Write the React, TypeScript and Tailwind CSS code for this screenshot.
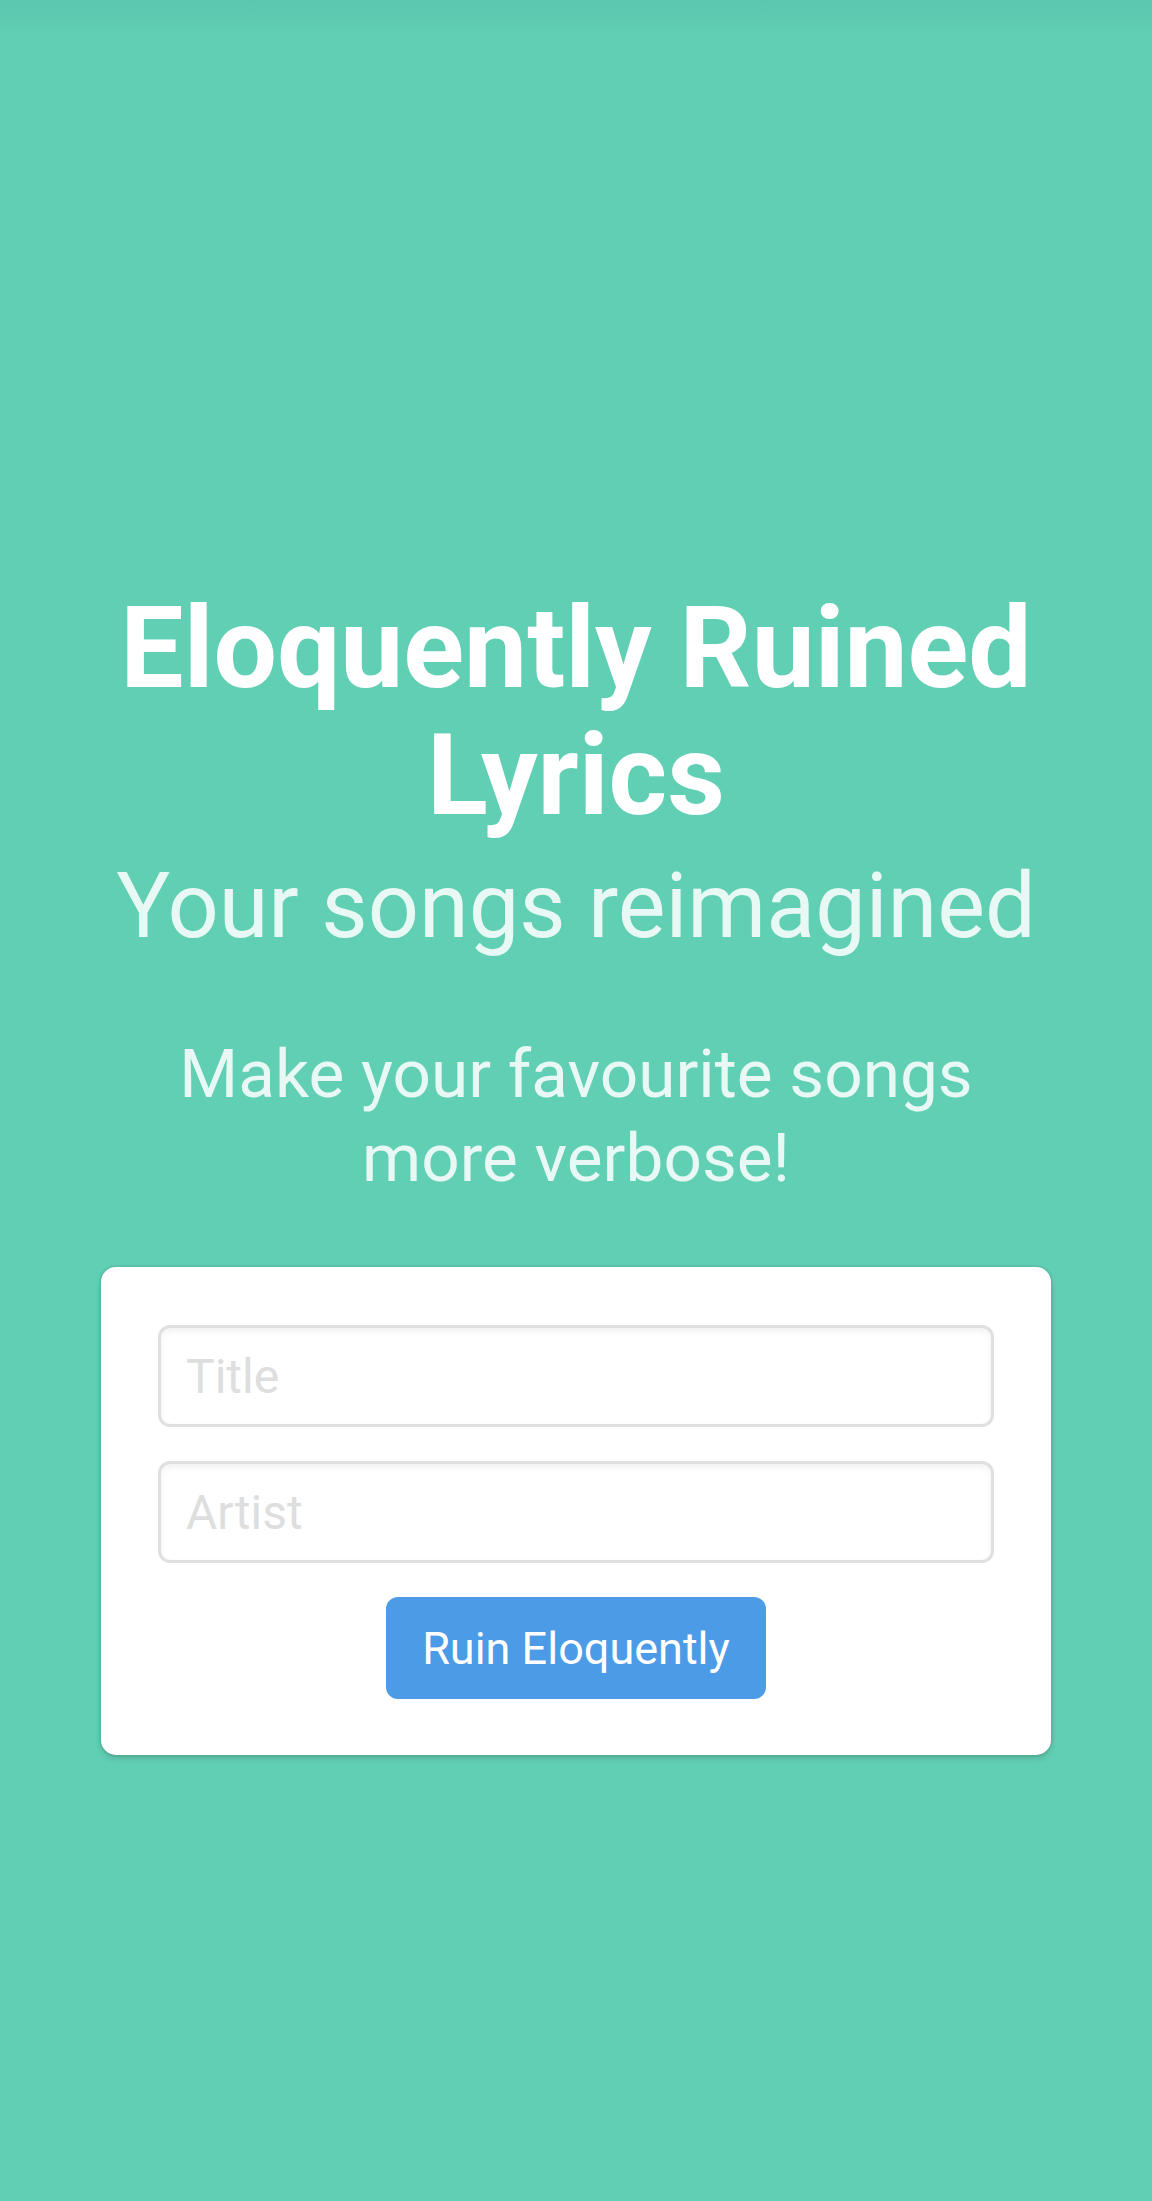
export default function App() {
  return (
    <main
      className="relative min-h-[2201px] bg-[#61cfb4] text-white"
      style={{ fontFamily: 'Roboto, "Noto Sans", sans-serif' }}
    >
      {/* faint shade under the status bar */}
      <div className="pointer-events-none absolute inset-x-0 top-0 h-[36px] bg-gradient-to-b from-[#5bc7ae] to-transparent" />

      <section className="relative mx-auto w-[950px] pt-[586px] text-center">
        <h1 className="text-[112.5px] font-bold leading-[126.5px] text-white">
          Eloquently Ruined Lyrics
        </h1>
        <h2 className="mt-[12px] text-[90px] font-normal leading-[112.5px] text-[#e8f8f4]">
          Your songs reimagined
        </h2>

        <p className="mt-[68px] text-[67.5px] leading-[84.4px] text-[#e8f8f4]">
          Make your favourite songs more verbose!
        </p>

        <form
          className="mt-[67px] rounded-[15px] bg-white px-[57px] pt-[58px] pb-[56px] shadow-[0_3px_6px_rgba(0,0,0,0.16),0_0_0_2px_rgba(0,0,0,0.04)]"
          onSubmit={(e) => e.preventDefault()}
        >
          <input
            type="text"
            placeholder="Title"
            className="block h-[102px] w-full rounded-[12px] border-[3px] border-[#e0e0e0] bg-white px-[25px] text-[48px] text-[#363636] shadow-[inset_0_3px_6px_rgba(10,10,10,0.06)] outline-none placeholder:text-[#dedede]"
          />
          <input
            type="text"
            placeholder="Artist"
            className="mt-[34px] block h-[102px] w-full rounded-[12px] border-[3px] border-[#e0e0e0] bg-white px-[25px] text-[48px] text-[#363636] shadow-[inset_0_3px_6px_rgba(10,10,10,0.06)] outline-none placeholder:text-[#dedede]"
          />
          <div className="mt-[34px] flex justify-center">
            <button
              type="submit"
              className="h-[102px] rounded-[12px] bg-[#4b9be6] px-[36px] text-[45px] leading-none text-white"
            >
              Ruin Eloquently
            </button>
          </div>
        </form>
      </section>
    </main>
  );
}
